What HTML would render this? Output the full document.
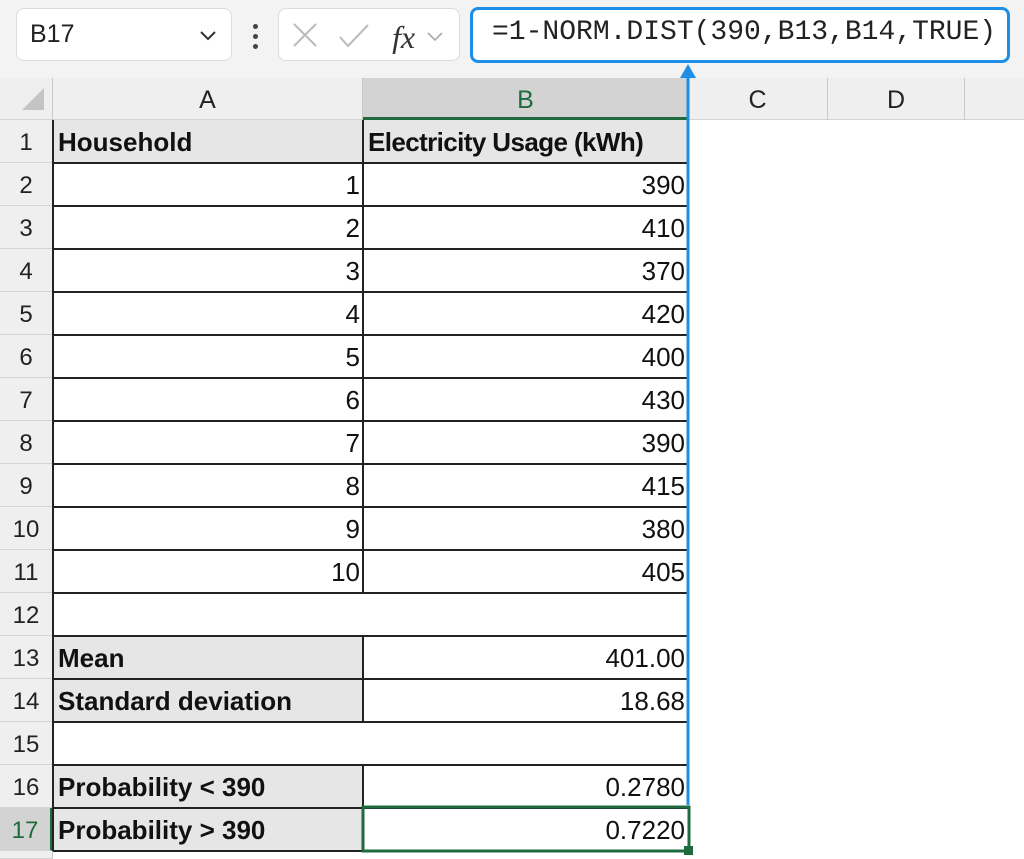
<!DOCTYPE html>
<html><head><meta charset="utf-8"><style>
*{margin:0;padding:0;box-sizing:border-box}
body{width:1024px;height:859px;background:#fff;position:relative;overflow:hidden;font-family:"Liberation Sans",sans-serif;color:#111}
.a{position:absolute}
.rh{position:absolute;left:0;width:53px;height:43px;background:#efefef;border-bottom:1px solid #d4d4d4;border-right:1px solid #c8c8c8;font-size:24px;text-align:center;line-height:45px;color:#222}
.c{position:absolute;height:43px;line-height:45px;font-size:26px;padding:0 3px 0 5px;white-space:nowrap}
.b{font-weight:bold}
.r{text-align:right}
.g{background:#e6e6e6}
</style></head><body>
<div class="a" style="left:0;top:0;width:1024px;height:78px;background:#f3f3f3"></div>
<div class="a" style="left:16px;top:8px;width:216px;height:53px;background:#fff;border:1px solid #dcdcdc;border-radius:8px"></div>
<div class="a" style="left:30px;top:20px;font-size:25px;color:#222">B17</div>
<svg class="a" style="left:198px;top:28px" width="20" height="14"><path d="M3 4 L10 11 L17 4" stroke="#333" stroke-width="2" fill="none"/></svg>
<div class="a" style="left:253px;top:24px;width:5px;height:5px;background:#444;border-radius:50%"></div>
<div class="a" style="left:253px;top:34px;width:5px;height:5px;background:#444;border-radius:50%"></div>
<div class="a" style="left:253px;top:44px;width:5px;height:5px;background:#444;border-radius:50%"></div>
<div class="a" style="left:278px;top:8px;width:182px;height:53px;background:#fff;border:1px solid #dcdcdc;border-radius:8px"></div>
<svg class="a" style="left:290px;top:20px" width="170" height="34"><path d="M4 4 L26 26 M26 4 L4 26" stroke="#bbb" stroke-width="2" fill="none"/><path d="M50 17 L58 26 L78 5" stroke="#bbb" stroke-width="2" fill="none"/><text x="102" y="28" font-family="Liberation Serif" font-style="italic" font-size="32" fill="#333">fx</text><path d="M138 13 L145 20 L152 13" stroke="#aaa" stroke-width="1.6" fill="none"/></svg>
<div class="a" style="left:470px;top:7px;width:540px;height:56px;background:#fff;border:3px solid #1e8ee6;border-radius:8px"></div>
<div class="a" style="left:492px;top:17px;font-family:'Liberation Mono',monospace;font-size:28px;color:#222">=1-NORM.DIST(390,B13,B14,TRUE)</div>
<div class="a" style="left:0;top:78px;width:1024px;height:42px;background:#efefef;border-bottom:1px solid #d4d4d4"></div>
<svg class="a" style="left:20px;top:86px" width="30" height="30"><path d="M24 2 L24 24 L2 24 Z" fill="#c4c4c4"/></svg>
<div class="a" style="left:52px;top:78px;width:1px;height:42px;background:#c8c8c8"></div>
<div class="a" style="left:53px;top:78px;width:310px;height:42px;text-align:center;line-height:44px;font-size:25px;color:#222;border-right:1px solid #c8c8c8">A</div>
<div class="a" style="left:363px;top:78px;width:325px;height:42px;background:#d3d3d3;text-align:center;line-height:44px;font-size:25px;color:#1e6b3e;border-bottom:3px solid #1e6b3e">B</div>
<div class="a" style="left:688px;top:78px;width:140px;height:42px;text-align:center;line-height:44px;font-size:25px;color:#222;border-right:1px solid #c8c8c8">C</div>
<div class="a" style="left:828px;top:78px;width:137px;height:42px;text-align:center;line-height:44px;font-size:25px;color:#222;border-right:1px solid #c8c8c8">D</div>
<div class="rh" style="top:120px">1</div><div class="rh" style="top:163px">2</div><div class="rh" style="top:206px">3</div><div class="rh" style="top:249px">4</div><div class="rh" style="top:292px">5</div><div class="rh" style="top:335px">6</div><div class="rh" style="top:378px">7</div><div class="rh" style="top:421px">8</div><div class="rh" style="top:464px">9</div><div class="rh" style="top:507px">10</div><div class="rh" style="top:550px">11</div><div class="rh" style="top:593px">12</div><div class="rh" style="top:636px">13</div><div class="rh" style="top:679px">14</div><div class="rh" style="top:722px">15</div><div class="rh" style="top:765px">16</div><div class="rh" style="top:808px;background:#d3d3d3;color:#1e6b3e;border-right:3px solid #1e6b3e">17</div>
<div class="rh" style="top:851px;height:8px"></div>
<div class="c b g" style="left:53px;top:120px;width:310px">Household</div>
<div class="c b g" style="left:363px;top:120px;width:325px;letter-spacing:-0.6px">Electricity Usage (kWh)</div>
<div class="c r" style="left:53px;top:163px;width:310px">1</div><div class="c r" style="left:363px;top:163px;width:325px">390</div>
<div class="c r" style="left:53px;top:206px;width:310px">2</div><div class="c r" style="left:363px;top:206px;width:325px">410</div>
<div class="c r" style="left:53px;top:249px;width:310px">3</div><div class="c r" style="left:363px;top:249px;width:325px">370</div>
<div class="c r" style="left:53px;top:292px;width:310px">4</div><div class="c r" style="left:363px;top:292px;width:325px">420</div>
<div class="c r" style="left:53px;top:335px;width:310px">5</div><div class="c r" style="left:363px;top:335px;width:325px">400</div>
<div class="c r" style="left:53px;top:378px;width:310px">6</div><div class="c r" style="left:363px;top:378px;width:325px">430</div>
<div class="c r" style="left:53px;top:421px;width:310px">7</div><div class="c r" style="left:363px;top:421px;width:325px">390</div>
<div class="c r" style="left:53px;top:464px;width:310px">8</div><div class="c r" style="left:363px;top:464px;width:325px">415</div>
<div class="c r" style="left:53px;top:507px;width:310px">9</div><div class="c r" style="left:363px;top:507px;width:325px">380</div>
<div class="c r" style="left:53px;top:550px;width:310px">10</div><div class="c r" style="left:363px;top:550px;width:325px">405</div>
<div class="c b g" style="left:53px;top:636px;width:310px">Mean</div><div class="c r" style="left:363px;top:636px;width:325px">401.00</div>
<div class="c b g" style="left:53px;top:679px;width:310px">Standard deviation</div><div class="c r" style="left:363px;top:679px;width:325px">18.68</div>
<div class="c b g" style="left:53px;top:765px;width:310px">Probability &lt; 390</div><div class="c r" style="left:363px;top:765px;width:325px">0.2780</div>
<div class="c b g" style="left:53px;top:808px;width:310px">Probability &gt; 390</div><div class="c r" style="left:363px;top:808px;width:325px">0.7220</div>
<svg class="a" style="left:0;top:0" width="1024" height="859">
<g stroke="#222" stroke-width="2">
<path d="M53 163 H688 M53 206 H688 M53 249 H688 M53 292 H688 M53 335 H688 M53 378 H688 M53 421 H688 M53 464 H688 M53 507 H688 M53 550 H688 M53 593 H688 M53 636 H688 M53 679 H688 M53 722 H688 M53 765 H688 M53 808 H688 M53 851 H363"/>
<path d="M363 120 V593 M363 636 V722 M363 765 V808 M53 120 V851"/>
</g>
<rect x="363" y="807" width="326" height="44" fill="none" stroke="#1e6b3e" stroke-width="3"/>
<rect x="684" y="846" width="9" height="9" fill="#1e6b3e"/>
<path d="M688 70 V805" stroke="#1e8ee6" stroke-width="3"/>
<path d="M680 78 L688 64 L696 78 Z" fill="#1e8ee6"/>
</svg>
</body></html>
